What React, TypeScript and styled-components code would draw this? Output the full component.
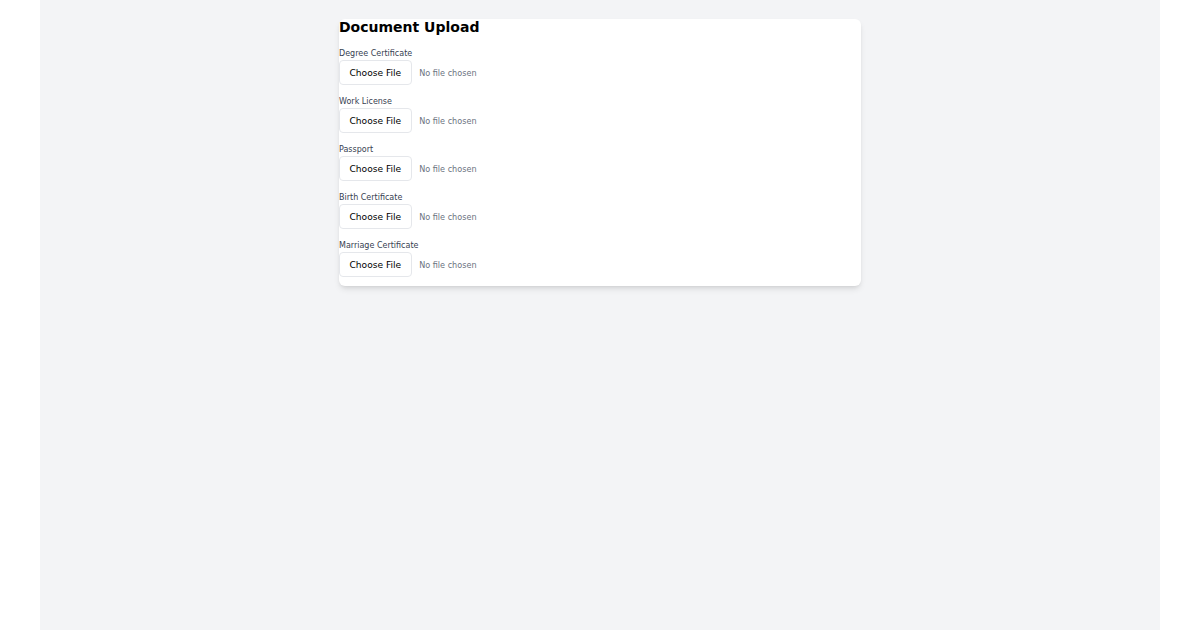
import React from 'react';
import styled, { createGlobalStyle } from 'styled-components';

const GlobalStyle = createGlobalStyle`
  html, body {
    margin: 0;
    padding: 0;
    background: #ffffff;
    font-family: "DejaVu Sans", sans-serif;
  }
`;

const Page = styled.div`
  max-width: 1120px;
  min-height: 630px;
  margin: 0 auto;
  background: #f3f4f6;
  padding-top: 19px;
  box-sizing: border-box;
`;

const Card = styled.div`
  width: 522px;
  margin: 0 auto;
  background: #ffffff;
  border-radius: 6px;
  box-shadow: 0 4px 6px -1px rgba(0, 0, 0, 0.1), 0 2px 4px -2px rgba(0, 0, 0, 0.1);
  padding-bottom: 9px;
`;

const Title = styled.h2`
  margin: 0 0 13px;
  font-size: 14px;
  line-height: 16px;
  font-weight: 700;
  color: #000;
`;

const Field = styled.div`
  display: flex;
  flex-direction: column;
  align-items: flex-start;
  margin-bottom: 11px;

  &:last-child {
    margin-bottom: 0;
  }
`;

const Label = styled.label`
  font-size: 8px;
  line-height: 12px;
  color: #374151;
`;

const FileInput = styled.input`
  font-family: "DejaVu Sans", sans-serif;
  font-size: 8.1px;
  color: #6b7280;
  height: 25px;

  &::file-selector-button {
    font-family: "DejaVu Sans", sans-serif;
    font-size: 9.1px;
    color: #000;
    background: #ffffff;
    border: 1px solid #e5e7eb;
    border-radius: 4px;
    height: 25px;
    padding: 0 9.5px;
    margin-right: 7.5px;
  }
`;

const documents = [
  'Degree Certificate',
  'Work License',
  'Passport',
  'Birth Certificate',
  'Marriage Certificate',
];

export default function App() {
  return (
    <>
      <GlobalStyle />
      <Page>
        <Card>
          <Title>Document Upload</Title>
          {documents.map((name) => (
            <Field key={name}>
              <Label>{name}</Label>
              <FileInput type="file" />
            </Field>
          ))}
        </Card>
      </Page>
    </>
  );
}
